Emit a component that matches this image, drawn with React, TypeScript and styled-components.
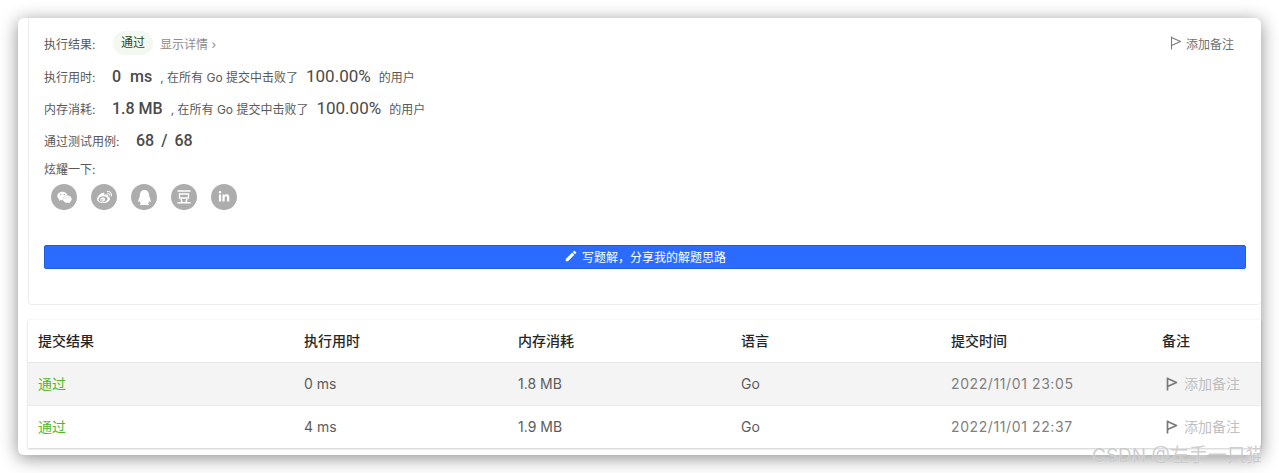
import { FC, ReactNode } from "react";
import styled, { createGlobalStyle } from "styled-components";
import { FaLinkedinIn, FaQq, FaWeibo, FaWeixin } from "react-icons/fa";
import { MdEdit } from "react-icons/md";

const GlobalStyle = createGlobalStyle`
  html, body {
    margin: 0;
    background: #fff;
    overflow: hidden;
  }
  body {
    font-family: Inter, "Noto Sans CJK SC", sans-serif;
    color: #595959;
  }
`;

const Page = styled.div`
  position: relative;
  width: 1279px;
  height: 473px;
  padding: 18px;
  box-sizing: border-box;
`;

const Card = styled.div`
  height: 437px;
  width: 1243px;
  padding: 0 0 0 10px;
  box-sizing: border-box;
  background: #fff;
  border-radius: 6px;
  box-shadow: 0 3px 18px rgba(0, 0, 0, 0.45);
`;

const ResultPanel = styled.div`
  height: 287px;
  box-sizing: border-box;
  padding: 13px 15px 0 15px;
  border: 1px solid #ededed;
  border-top: none;
  border-right: none;
  border-radius: 0 0 4px 4px;
`;

const StatusRow = styled.div`
  display: flex;
  align-items: center;
  height: 24px;
  margin-bottom: 5px;
  font-size: 12px;
  white-space: nowrap;
`;

const InfoRow = styled.div`
  display: flex;
  align-items: center;
  height: 32px;
  font-size: 12px;
  white-space: nowrap;
`;

const Label = styled.span<{ $width: number }>`
  flex: 0 0 ${(p) => p.$width}px;
  color: #595959;
`;

const Badge = styled.span`
  background: #f3f9f0;
  color: #2c4a22;
  border-radius: 12px;
  padding: 0 8px;
  line-height: 24px;
`;

const DetailLink = styled.span`
  margin-left: 7px;
  color: #8c8c8c;
`;

const AddNote = styled.span`
  margin-left: auto;
  margin-right: 12px;
  display: flex;
  align-items: center;
  gap: 3px;
  color: #707070;
`;

const Stat = styled.strong<{ $wordGap: number }>`
  font-family: Roboto, sans-serif;
  font-size: 16px;
  font-weight: 500;
  word-spacing: ${(p) => p.$wordGap}px;
  color: #4a4a4a;
`;

const Percent = styled.span`
  font-family: Roboto, sans-serif;
  font-size: 17px;
  font-weight: 400;
  color: #4a4a4a;
`;

const Note = styled.span`
  margin: 0 8px;
  color: #595959;
`;

const ShareTitle = styled.div`
  margin-top: 6px;
  font-size: 12px;
  line-height: 16px;
  color: #595959;
`;

const ShareList = styled.div`
  display: flex;
  gap: 14px;
  margin: 6px 0 0 7px;
`;

const ShareIcon = styled.span`
  width: 26px;
  height: 26px;
  border-radius: 50%;
  background: #adadad;
  color: #fff;
  display: flex;
  align-items: center;
  justify-content: center;
  font-size: 14px;
`;

const WriteButton = styled.button`
  display: flex;
  align-items: center;
  justify-content: center;
  gap: 4px;
  width: 1202px;
  height: 24px;
  margin-top: 35px;
  padding: 0 0 2px;
  border: 1px solid #1f5fd6;
  border-radius: 2px;
  background: #2b6bff;
  color: #fff;
  font-family: inherit;
  font-size: 12px;
`;

const Table = styled.div`
  margin-top: 15px;
  background: #fff;
  box-shadow: 0 1px 2px rgba(0, 0, 0, 0.18), 0 0 2px rgba(0, 0, 0, 0.06);
`;

const Row = styled.div<{ $striped?: boolean; $head?: boolean }>`
  display: grid;
  grid-template-columns: 266px 214px 223px 210px 211px 119px;
  align-items: center;
  height: 43px;
  box-sizing: border-box;
  border-bottom: 1px solid ${(p) => (p.$head ? "#e8e8e8" : "#ececec")};
  background: ${(p) => (p.$striped ? "#f4f4f4" : "#fff")};
  font-size: 14px;
  line-height: 20px;
  color: ${(p) => (p.$head ? "#262626" : "#5c5c5c")};
  font-weight: ${(p) => (p.$head ? 500 : 400)};
  &:last-child {
    border-bottom: none;
    height: 42px;
  }
`;

const Cell = styled.div`
  padding-left: 10px;
  white-space: nowrap;
`;

const Passed = styled(Cell)`
  color: #52b82a;
`;

const Time = styled(Cell)`
  color: #808080;
  letter-spacing: 0.6px;
`;

const RowNote = styled(Cell)`
  display: flex;
  align-items: center;
  gap: 5px;
  padding-left: 13px;
  color: #bfbfbf;
`;

const Watermark = styled.div`
  position: absolute;
  left: 1092px;
  top: 445px;
  width: 169px;
  overflow: hidden;
  white-space: nowrap;
  font-size: 19px;
  line-height: 22px;
  color: rgba(165, 165, 165, 0.55);
  text-shadow: 0 0 1px rgba(255, 255, 255, 0.9);
`;

const Flag: FC<{ size: number; weight: number }> = ({ size, weight }) => (
  <svg width={size} height={size} viewBox="0 0 14 14" fill="none" stroke="#7a7a7a" strokeWidth={weight}>
    <path d="M2.5 0.5v13" />
    <path d="M2.5 1.5 L11.5 5.5 L2.5 9.5" strokeLinejoin="round" />
  </svg>
);

const DoubanGlyph: FC = () => (
  <svg width="16" height="16" viewBox="0 0 16 16" fill="none" stroke="#fff" strokeWidth="1.4">
    <path d="M1.5 2h13M3.5 5h9v4h-9zM5 10l1 3M11 10l-1 3M1.5 13.7h13" />
  </svg>
);

const records = [
  { runtime: "0 ms", memory: "1.8 MB", time: "2022/11/01 23:05", striped: true },
  { runtime: "4 ms", memory: "1.9 MB", time: "2022/11/01 22:37", striped: false },
];

const shareIcons: ReactNode[] = [
  <FaWeixin key="wechat" size={15} />,
  <FaWeibo key="weibo" size={15} />,
  <FaQq key="qq" size={15} />,
  <DoubanGlyph key="douban" />,
  <FaLinkedinIn key="linkedin" size={12} />,
];

const App: FC = () => (
  <Page>
    <GlobalStyle />
    <Card>
      <ResultPanel>
        <StatusRow>
          <Label $width={69}>执行结果:</Label>
          <Badge>通过</Badge>
          <DetailLink>显示详情 ›</DetailLink>
          <AddNote>
            <Flag size={14} weight={1.1} />
            添加备注
          </AddNote>
        </StatusRow>
        <InfoRow>
          <Label $width={68}>执行用时:</Label>
          <Stat $wordGap={5}>0 ms</Stat>
          <Note>, 在所有 Go 提交中击败了</Note>
          <Percent>100.00%</Percent>
          <Note>的用户</Note>
        </InfoRow>
        <InfoRow>
          <Label $width={68}>内存消耗:</Label>
          <Stat $wordGap={0}>1.8 MB</Stat>
          <Note>, 在所有 Go 提交中击败了</Note>
          <Percent>100.00%</Percent>
          <Note>的用户</Note>
        </InfoRow>
        <InfoRow>
          <Label $width={92}>通过测试用例:</Label>
          <Stat $wordGap={3}>68 / 68</Stat>
        </InfoRow>
        <ShareTitle>炫耀一下:</ShareTitle>
        <ShareList>
          {shareIcons.map((icon, i) => (
            <ShareIcon key={i}>{icon}</ShareIcon>
          ))}
        </ShareList>
        <WriteButton>
          <MdEdit size={14} />
          写题解，分享我的解题思路
        </WriteButton>
      </ResultPanel>
      <Table>
        <Row $head>
          <Cell>提交结果</Cell>
          <Cell>执行用时</Cell>
          <Cell>内存消耗</Cell>
          <Cell>语言</Cell>
          <Cell>提交时间</Cell>
          <Cell>备注</Cell>
        </Row>
        {records.map((record) => (
          <Row key={record.time} $striped={record.striped}>
            <Passed>通过</Passed>
            <Cell>{record.runtime}</Cell>
            <Cell>{record.memory}</Cell>
            <Cell>Go</Cell>
            <Time>{record.time}</Time>
            <RowNote>
              <Flag size={14} weight={1.7} />
              添加备注
            </RowNote>
          </Row>
        ))}
      </Table>
    </Card>
    <Watermark>CSDN @左手一只猫</Watermark>
  </Page>
);

export default App;
